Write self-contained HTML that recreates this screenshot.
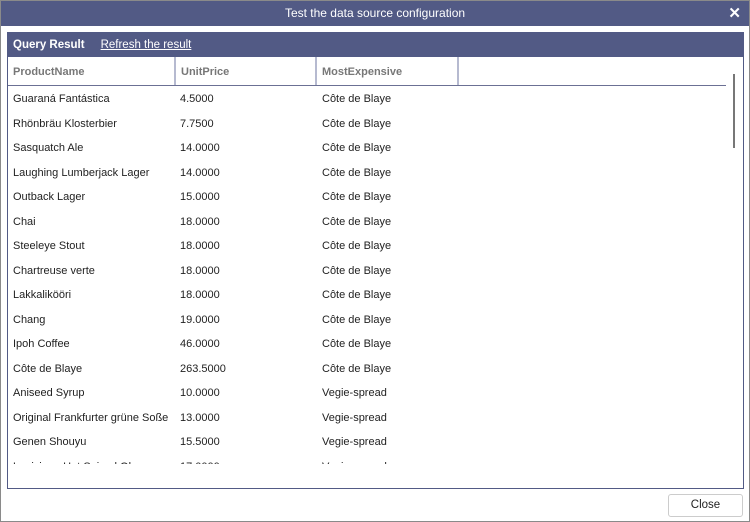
<!DOCTYPE html>
<html><head><style>
*{margin:0;padding:0;box-sizing:border-box}
body{width:750px;height:522px;background:#fff;font-family:"Liberation Sans",sans-serif;position:relative;overflow:hidden}
.frame{position:absolute;left:0;top:0;width:750px;height:522px;border:1px solid #8a8a8a;pointer-events:none}
.title{position:absolute;left:0;top:0;width:750px;height:26px;background:#525a85;color:#fff;font-size:12px;text-align:center;line-height:27px}
.x{position:absolute;right:9px;top:0;font-size:15px;font-weight:bold;color:#fff;line-height:27px}
.panel{position:absolute;left:7px;top:32px;width:737px;height:457px;border:1px solid #525a85;background:#fff}
.hdr{height:24px;background:#525a85;color:#fff;font-size:11.5px;line-height:24px;padding-left:5px}
.hdr b{margin-right:16px}
.cols{position:absolute;left:0;top:24px;width:718px;height:29px;border-bottom:1px solid #6b7094}
.c{position:absolute;top:0;height:28px;border-right:2px solid #b6bad0;font-size:11px;font-weight:bold;color:#777;line-height:30px;padding-left:5px}
.rows{position:absolute;left:0;top:53px;width:720px;height:378px;overflow:hidden}
.r{height:24.5px;position:relative;font-size:11px;color:#222;line-height:24px}
.r span{position:absolute;top:0}
.sb{position:absolute;left:725px;top:41px;width:2px;height:74px;background:#777}
.btn{position:absolute;left:668px;top:494px;width:75px;height:23px;border:1px solid #ccc;border-radius:3px;font-size:11.5px;text-align:center;line-height:21px;color:#222}
</style></head><body>
<div class="title">Test the data source configuration<span class="x">✕</span></div>
<div class="panel">
<div class="hdr"><b>Query Result</b><u>Refresh the result</u></div>
<div class="cols">
<div class="c" style="left:0;width:168px">ProductName</div>
<div class="c" style="left:168px;width:141px">UnitPrice</div>
<div class="c" style="left:309px;width:142px">MostExpensive</div>
</div>
<div class="rows">
<div style="height:1px"></div>
<div class="r"><span style="left:5px">Guaraná Fantástica</span><span style="left:172px">4.5000</span><span style="left:314px">Côte de Blaye</span></div>
<div class="r"><span style="left:5px">Rhönbräu Klosterbier</span><span style="left:172px">7.7500</span><span style="left:314px">Côte de Blaye</span></div>
<div class="r"><span style="left:5px">Sasquatch Ale</span><span style="left:172px">14.0000</span><span style="left:314px">Côte de Blaye</span></div>
<div class="r"><span style="left:5px">Laughing Lumberjack Lager</span><span style="left:172px">14.0000</span><span style="left:314px">Côte de Blaye</span></div>
<div class="r"><span style="left:5px">Outback Lager</span><span style="left:172px">15.0000</span><span style="left:314px">Côte de Blaye</span></div>
<div class="r"><span style="left:5px">Chai</span><span style="left:172px">18.0000</span><span style="left:314px">Côte de Blaye</span></div>
<div class="r"><span style="left:5px">Steeleye Stout</span><span style="left:172px">18.0000</span><span style="left:314px">Côte de Blaye</span></div>
<div class="r"><span style="left:5px">Chartreuse verte</span><span style="left:172px">18.0000</span><span style="left:314px">Côte de Blaye</span></div>
<div class="r"><span style="left:5px">Lakkalikööri</span><span style="left:172px">18.0000</span><span style="left:314px">Côte de Blaye</span></div>
<div class="r"><span style="left:5px">Chang</span><span style="left:172px">19.0000</span><span style="left:314px">Côte de Blaye</span></div>
<div class="r"><span style="left:5px">Ipoh Coffee</span><span style="left:172px">46.0000</span><span style="left:314px">Côte de Blaye</span></div>
<div class="r"><span style="left:5px">Côte de Blaye</span><span style="left:172px">263.5000</span><span style="left:314px">Côte de Blaye</span></div>
<div class="r"><span style="left:5px">Aniseed Syrup</span><span style="left:172px">10.0000</span><span style="left:314px">Vegie-spread</span></div>
<div class="r"><span style="left:5px">Original Frankfurter grüne Soße</span><span style="left:172px">13.0000</span><span style="left:314px">Vegie-spread</span></div>
<div class="r"><span style="left:5px">Genen Shouyu</span><span style="left:172px">15.5000</span><span style="left:314px">Vegie-spread</span></div>
<div class="r"><span style="left:5px">Louisiana Hot Spiced Okra</span><span style="left:172px">17.0000</span><span style="left:314px">Vegie-spread</span></div>
</div>
<div class="sb"></div>
</div>
<div class="btn">Close</div>
<div class="frame"></div>
</body></html>
